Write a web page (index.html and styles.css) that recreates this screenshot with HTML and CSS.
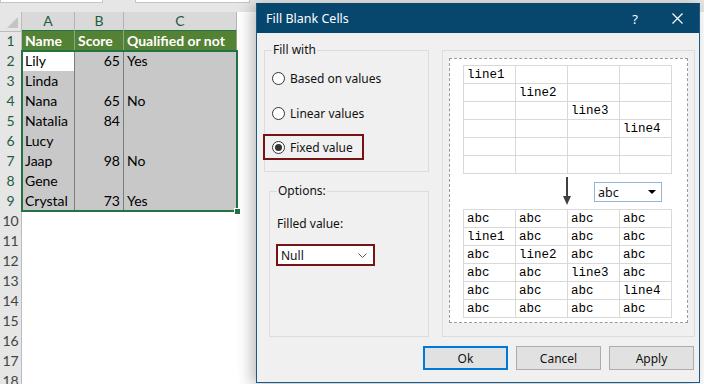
FILE: index.html
```html
<!DOCTYPE html>
<html lang="en">
<head>
  <meta charset="UTF-8" />
  <title>Fill Blank Cells</title>
  <link rel="stylesheet" href="styles.css">
</head>
<body>
  <div class="sheet">
    <div class="topbar">
      <div class="namebox"></div>
      <div class="formula"></div>
    </div>

    <div class="row head">
      <div class="corner"></div>
      <div class="col sel">A</div>
      <div class="col sel">B</div>
      <div class="col sel">C</div>
      <div class="col"></div>
    </div>

    <div class="row title">
      <div class="num sel">1</div>
      <div class="cell">Name</div>
      <div class="cell">Score</div>
      <div class="cell">Qualified or not</div>
      <div class="cell blank"></div>
    </div>
    <div class="row data">
      <div class="num sel">2</div>
      <div class="cell active">Lily</div>
      <div class="cell r">65</div>
      <div class="cell">Yes</div>
      <div class="cell blank"></div>
    </div>
    <div class="row data">
      <div class="num sel">3</div>
      <div class="cell">Linda</div>
      <div class="cell r"></div>
      <div class="cell"></div>
      <div class="cell blank"></div>
    </div>
    <div class="row data">
      <div class="num sel">4</div>
      <div class="cell">Nana</div>
      <div class="cell r">65</div>
      <div class="cell">No</div>
      <div class="cell blank"></div>
    </div>
    <div class="row data">
      <div class="num sel">5</div>
      <div class="cell">Natalia</div>
      <div class="cell r">84</div>
      <div class="cell"></div>
      <div class="cell blank"></div>
    </div>
    <div class="row data">
      <div class="num sel">6</div>
      <div class="cell">Lucy</div>
      <div class="cell r"></div>
      <div class="cell"></div>
      <div class="cell blank"></div>
    </div>
    <div class="row data">
      <div class="num sel">7</div>
      <div class="cell">Jaap</div>
      <div class="cell r">98</div>
      <div class="cell">No</div>
      <div class="cell blank"></div>
    </div>
    <div class="row data">
      <div class="num sel">8</div>
      <div class="cell">Gene</div>
      <div class="cell r"></div>
      <div class="cell"></div>
      <div class="cell blank"></div>
    </div>
    <div class="row data">
      <div class="num sel">9</div>
      <div class="cell">Crystal</div>
      <div class="cell r">73</div>
      <div class="cell">Yes</div>
      <div class="cell blank"></div>
    </div>
    <div class="row empty"><div class="num">10</div></div>
    <div class="row empty"><div class="num">11</div></div>
    <div class="row empty"><div class="num">12</div></div>
    <div class="row empty"><div class="num">13</div></div>
    <div class="row empty"><div class="num">14</div></div>
    <div class="row empty"><div class="num">15</div></div>
    <div class="row empty"><div class="num">16</div></div>
    <div class="row empty"><div class="num">17</div></div>
    <div class="row empty"><div class="num">18</div></div>

    <div class="selection"><span class="handle"></span></div>
  </div>

  <div class="dialog">
    <div class="titlebar">
      <span class="caption">Fill Blank Cells</span>
      <span class="help">?</span>
      <svg class="close" width="11" height="11" viewBox="0 0 11 11">
        <path d="M0.5 0.5 L10.5 10.5 M10.5 0.5 L0.5 10.5" stroke="#fff" stroke-width="1.2" fill="none"/>
      </svg>
    </div>

    <div class="dlg-body">
      <div class="left">
        <fieldset class="group fill">
          <legend>Fill with</legend>
          <div class="option"><span class="radio"></span>Based on values</div>
          <div class="option"><span class="radio"></span>Linear values</div>
          <div class="option marked"><span class="radio on"></span>Fixed value</div>
        </fieldset>

        <fieldset class="group options">
          <legend>Options:</legend>
          <div class="label">Filled value:</div>
          <div class="select marked">
            <span>Null</span>
            <svg width="9" height="5" viewBox="0 0 9 5">
              <path d="M0.5 0.5 L4.5 4.5 L8.5 0.5" stroke="#555" fill="none"/>
            </svg>
          </div>
        </fieldset>
      </div>

      <div class="preview">
        <div class="canvas">
          <div class="grid">
            <div>line1</div><div></div><div></div><div></div>
            <div></div><div>line2</div><div></div><div></div>
            <div></div><div></div><div>line3</div><div></div>
            <div></div><div></div><div></div><div>line4</div>
            <div></div><div></div><div></div><div></div>
            <div></div><div></div><div></div><div></div>
          </div>

          <div class="middle">
            <svg class="arrow" width="10" height="28" viewBox="0 0 10 28">
              <path d="M5 0 V20" stroke="#404040" stroke-width="2"/>
              <path d="M1 19 H9 L5 28 Z" fill="#404040"/>
            </svg>
            <div class="combo">
              <span>abc</span>
              <span class="tri"></span>
            </div>
          </div>

          <div class="grid">
            <div>abc</div><div>abc</div><div>abc</div><div>abc</div>
            <div>line1</div><div>abc</div><div>abc</div><div>abc</div>
            <div>abc</div><div>line2</div><div>abc</div><div>abc</div>
            <div>abc</div><div>abc</div><div>line3</div><div>abc</div>
            <div>abc</div><div>abc</div><div>abc</div><div>line4</div>
            <div>abc</div><div>abc</div><div>abc</div><div>abc</div>
          </div>
        </div>
      </div>

      <div class="buttons">
        <button class="default">Ok</button>
        <button>Cancel</button>
        <button>Apply</button>
      </div>
    </div>
  </div>
</body>
</html>
```

FILE: styles.css
```css
* {
  box-sizing: border-box;
}
body {
  margin: 0;
  width: 704px;
  height: 384px;
  overflow: hidden;
  background: #fff;
  font-family: Lato, "Liberation Sans", sans-serif;
}

/* ---- worksheet ---- */
.sheet {
  position: relative;
}
.topbar {
  height: 12px;
  background: #e6e6e6;
  display: flex;
}
.namebox, .formula {
  height: 3px;
  background: #fff;
  border: 1px solid #c6c6c6;
  border-top: none;
}
.namebox {
  width: 103px;
}
.formula {
  width: 115px;
  margin-left: 32px;
}
.row {
  display: grid;
  grid-template-columns: 22px 53px 49px 113px 1fr;
  height: 20px;
  font-size: 14px;
}
.row.head {
  height: 19px;
}
.corner {
  position: relative;
  background: #e6e6e6;
  border-right: 1px solid #bcbcbc;
  border-bottom: 1px solid #bcbcbc;
}
.corner::after {
  content: "";
  position: absolute;
  right: 3px;
  bottom: 3px;
  border-left: 11px solid transparent;
  border-bottom: 11px solid #c4c4c4;
}
.col {
  background: #fff;
  text-align: center;
  line-height: 18px;
  color: #444;
}
.col.sel {
  background: #d9d9d9;
  color: #225d40;
  border-right: 1px solid #b4b4b4;
  border-bottom: 2px solid #217346;
}
.num {
  background: #e6e6e6;
  border-right: 1px solid #bcbcbc;
  border-bottom: 1px solid #c9c9c9;
  text-align: center;
  line-height: 20px;
  color: #444;
}
.num.sel {
  color: #225d40;
}
.cell {
  padding: 0 3px;
  line-height: 20px;
  white-space: nowrap;
  overflow: hidden;
}
.cell.r {
  text-align: right;
}
.title .cell {
  background: #548235;
  color: #fff;
  font-weight: bold;
  border-right: 1px solid #8da77b;
}
.data .cell {
  background: #c8c8c8;
  color: #000;
  border-right: 1px solid #7c7c7c;
  border-bottom: 1px solid #7c7c7c;
}
.data .cell.active {
  background: #fff;
}
.title .cell.blank, .data .cell.blank {
  background: #fff;
  border: none;
}
.selection {
  position: absolute;
  left: 21px;
  top: 50px;
  width: 217px;
  height: 162px;
  border: 2px solid #217346;
}
.handle {
  position: absolute;
  right: -5px;
  bottom: -5px;
  width: 7px;
  height: 7px;
  background: #217346;
  border: 1px solid #fff;
}

/* ---- dialog ---- */
.dialog {
  position: absolute;
  left: 256px;
  top: 3px;
  width: 444px;
  height: 380px;
  background: #f0f0f0;
  border: 1px solid #1c5985;
  border-top-color: #07466d;
  box-shadow: -4px 2px 14px rgba(0,0,0,0.28);
  font-family: "Noto Sans", "Open Sans", sans-serif;
  font-size: 12px;
  color: #111;
}
.titlebar {
  height: 29px;
  background: #07466d;
  color: #fff;
  display: flex;
  align-items: center;
  padding-left: 9px;
}
.caption {
  flex: 1;
  font-size: 12.5px;
}
.help {
  font-size: 13px;
  margin-right: 34px;
}
.close {
  margin-right: 16px;
}
.dlg-body {
  display: grid;
  grid-template-columns: 178px 253px;
  padding: 9px 0 0 7px;
}
.group {
  margin: 0;
  padding: 0 0 0 7px;
  border: 1px solid #dcdcdc;
}
.group legend {
  margin-left: 0px;
  padding: 0 1px;
  line-height: 16px;
}
.fill {
  width: 165px;
  height: 130px;
}
.option {
  display: flex;
  align-items: center;
  height: 20px;
  margin-top: 10px;
}
.option + .option {
  margin-top: 15px;
}
.option.marked {
  margin-top: 11px;
  margin-left: -9px;
  padding-left: 7px;
  width: 101px;
  height: 26px;
}
.marked {
  border: 2px solid #751316;
}
.radio {
  position: relative;
  width: 13px;
  height: 13px;
  border: 1px solid #333;
  border-radius: 50%;
  background: #fff;
  margin: 0 5px 0 0;
}
.radio.on::after {
  content: "";
  position: absolute;
  left: 2px;
  top: 2px;
  width: 7px;
  height: 7px;
  border-radius: 50%;
  background: #333;
}
.options {
  margin: 11px 0 0 5px;
  width: 160px;
  height: 154px;
}
.label {
  margin-top: 17px;
  line-height: 16px;
}
.select {
  margin: 12px 0 0 -1px;
  width: 99px;
  height: 22px;
  background: #fff;
  display: flex;
  align-items: center;
  justify-content: space-between;
  padding: 0 6px 0 3px;
}

.preview {
  margin-top: 8px;
  height: 287px;
  border: 1px solid #dcdcdc;
  padding: 7px 6px 13px 6px;
  display: flex;
}
.canvas {
  flex: 1;
  background: #fff;
  border: 1px dashed #9a9a9a;
  padding: 6px 0 0 13px;
}
.grid {
  display: grid;
  grid-template-columns: repeat(4, 52px);
  width: 209px;
  border-top: 1px solid #d9d9d9;
  border-left: 1px solid #d9d9d9;
  font-family: "Liberation Mono", monospace;
  font-size: 12.5px;
  color: #000;
}
.grid div {
  height: 18px;
  border-right: 1px solid #d9d9d9;
  border-bottom: 1px solid #d9d9d9;
  padding-left: 3px;
  line-height: 19px;
}
.middle {
  height: 35px;
  display: flex;
  align-items: flex-start;
}
.arrow {
  margin: 3px 0 0 99px;
}
.combo {
  margin: 8px 0 0 22px;
  width: 68px;
  height: 20px;
  border: 1px solid #8fb5dc;
  background: #fff;
  display: flex;
  align-items: center;
  justify-content: space-between;
  padding: 0 5px 0 3px;
  font-size: 12.5px;
}
.tri {
  border-left: 4px solid transparent;
  border-right: 4px solid transparent;
  border-top: 4px solid #000;
}

.buttons {
  grid-column: 1 / -1;
  display: flex;
  justify-content: flex-end;
  gap: 8px;
  margin-top: 9px;
  padding-right: 1px;
}
.buttons button {
  width: 85px;
  height: 24px;
  background: #e1e1e1;
  border: 1px solid #adadad;
  font-family: "Noto Sans", "Open Sans", sans-serif;
  font-size: 12px;
  color: #111;
  padding: 0;
}
.buttons button.default {
  border: 2px solid #0078d7;
}
```
